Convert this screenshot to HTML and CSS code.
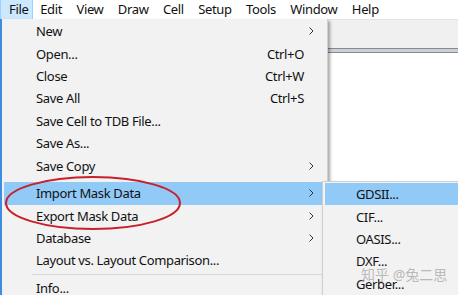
FILE: index.html
```html
<!DOCTYPE html>
<html>
<head>
    <link rel="stylesheet" href="styles.css">
</head>
<body>
    <div class="window">
        <div class="menubar">
            <span class="menubar-item active">File</span>
            <span class="menubar-item">Edit</span>
            <span class="menubar-item">View</span>
            <span class="menubar-item">Draw</span>
            <span class="menubar-item">Cell</span>
            <span class="menubar-item">Setup</span>
            <span class="menubar-item">Tools</span>
            <span class="menubar-item">Window</span>
            <span class="menubar-item">Help</span>
        </div>
        <div class="workspace">
            <div class="toolbar"></div>
            <div class="splitter"></div>
            <div class="canvas"></div>
        </div>

        <div class="menu file-menu">
            <div class="menu-item"><span class="label">New</span><span class="arrow"><svg width="5" height="8" viewBox="0 0 5 8"><path d="M0.5 0.5 L4 4 L0.5 7.5" fill="none" stroke="#333" stroke-width="1"/></svg></span></div>
            <div class="menu-item"><span class="label">Open...</span><span class="shortcut">Ctrl+O</span></div>
            <div class="menu-item"><span class="label">Close</span><span class="shortcut">Ctrl+W</span></div>
            <div class="menu-item"><span class="label">Save All</span><span class="shortcut">Ctrl+S</span></div>
            <div class="menu-item"><span class="label">Save Cell to TDB File...</span></div>
            <div class="menu-item"><span class="label">Save As...</span></div>
            <div class="menu-item"><span class="label">Save Copy</span><span class="arrow"><svg width="5" height="8" viewBox="0 0 5 8"><path d="M0.5 0.5 L4 4 L0.5 7.5" fill="none" stroke="#333" stroke-width="1"/></svg></span></div>
            <div class="menu-sep"></div>
            <div class="menu-item selected"><span class="label">Import Mask Data</span><span class="arrow"><svg width="5" height="8" viewBox="0 0 5 8"><path d="M0.5 0.5 L4 4 L0.5 7.5" fill="none" stroke="#333" stroke-width="1"/></svg></span></div>
            <div class="menu-item"><span class="label">Export Mask Data</span><span class="arrow"><svg width="5" height="8" viewBox="0 0 5 8"><path d="M0.5 0.5 L4 4 L0.5 7.5" fill="none" stroke="#333" stroke-width="1"/></svg></span></div>
            <div class="menu-item"><span class="label">Database</span><span class="arrow"><svg width="5" height="8" viewBox="0 0 5 8"><path d="M0.5 0.5 L4 4 L0.5 7.5" fill="none" stroke="#333" stroke-width="1"/></svg></span></div>
            <div class="menu-item"><span class="label">Layout vs. Layout Comparison...</span></div>
            <div class="menu-sep line"></div>
            <div class="menu-item"><span class="label">Info...</span></div>
        </div>

        <div class="menu sub-menu">
            <div class="menu-item selected"><span class="label">GDSII...</span></div>
            <div class="menu-item"><span class="label">CIF...</span></div>
            <div class="menu-item"><span class="label">OASIS...</span></div>
            <div class="menu-item"><span class="label">DXF...</span></div>
            <div class="menu-item"><span class="label">Gerber...</span></div>
        </div>

        <svg class="mark" width="190" height="62" viewBox="0 0 190 62">
            <ellipse cx="89" cy="30" rx="87" ry="26" fill="none" stroke="#c8202c" stroke-width="2"/>
        </svg>

        <div class="watermark">知乎 @兔二思</div>
    </div>
</body>
</html>
```

FILE: styles.css
```css
body {
    margin: 0;
    font-family: "Noto Sans", "Noto Sans CJK SC", sans-serif;
    font-size: 13px;
    letter-spacing: -0.35px;
    color: #111;
}
.window {
    position: relative;
    width: 458px;
    height: 295px;
    overflow: hidden;
    background: #fff;
}
.menubar {
    display: flex;
    height: 19px;
    background: #fff;
}
.menubar-item {
    padding: 0 6.2px;
    line-height: 19px;
    border: 1px solid transparent;
    border-top: none;
    border-bottom: none;
}
.menubar-item.active {
    box-sizing: border-box;
    width: 33px;
    padding: 0 0 0 8px;
    background: #cce8ff;
    border-color: #99d1ff;
}
.workspace {
    border-left: 2px solid #3d8ee0;
    height: 276px;
}
.toolbar {
    height: 28px;
    background: #f0f0f0;
    border-top: 1px solid #e3e3e3;
}
.splitter {
    height: 3px;
    background: #c9d0da;
    border-top: 1px solid #8a8a8a;
    border-bottom: 1px solid #8a8a8a;
}
.canvas {
    height: 240px;
    background: #fff;
}
.menu {
    position: absolute;
    background: #f2f2f2;
    box-shadow: 2px 2px 3px rgba(0, 0, 0, 0.35);
}
.file-menu {
    left: 0;
    top: 19px;
    width: 322px;
    padding: 1px 1px 4px 2px;
    border-left: 2px solid #3d8ee0;
    border-right: 1px solid #cfcfcf;
}
.sub-menu {
    left: 322px;
    top: 181px;
    width: 160px;
    padding: 1px 2px;
    border: 1px solid #cfcfcf;
}
.menu-item {
    display: flex;
    align-items: center;
    height: 22.4px;
    padding-left: 32px;
    padding-right: 12px;
    white-space: nowrap;
}
.sub-menu .menu-item {
    padding-left: 31px;
}
.menu-item.selected {
    background: #91c9f7;
}
.label {
    flex: 1;
}
.shortcut {
    margin-right: 10px;
}
.arrow {
    display: flex;
}
.menu-sep {
    height: 5.4px;
    position: relative;
}
.menu-sep.line::after {
    content: "";
    position: absolute;
    left: 28px;
    right: 0;
    top: 2px;
    border-top: 1px solid #d7d7d7;
}
.mark {
    position: absolute;
    left: 4px;
    top: 173px;
}
.watermark {
    position: absolute;
    left: 361px;
    top: 264px;
    font-size: 14px;
    white-space: nowrap;
    letter-spacing: 0;
    color: rgba(160, 160, 160, 0.7);
}
```
